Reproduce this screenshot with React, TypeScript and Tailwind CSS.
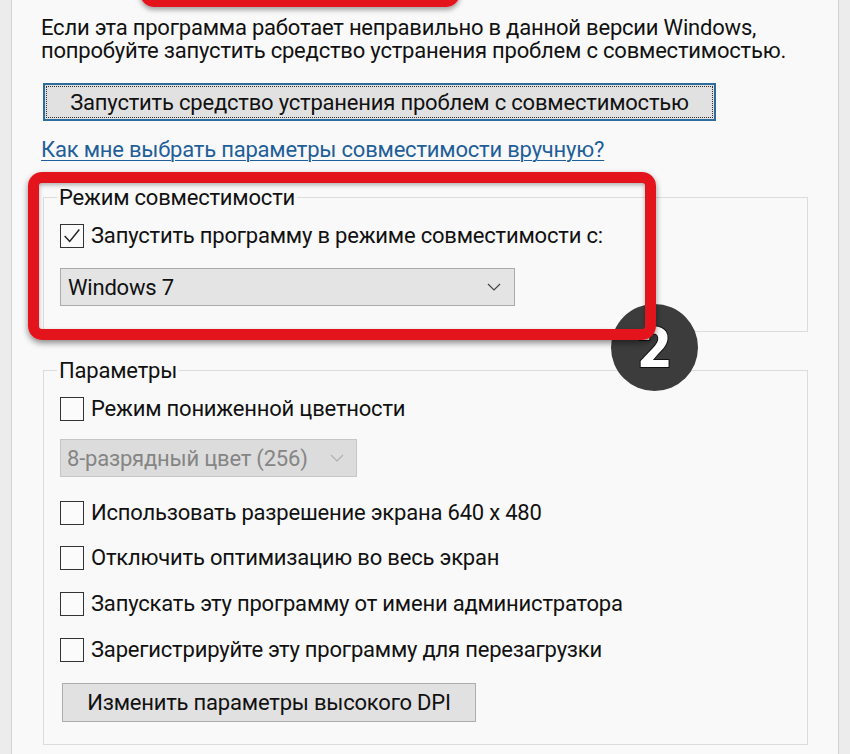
import React from 'react';

const font = { fontFamily: 'Roboto, "Open Sans", sans-serif' };

const Checkbox = ({ checked = false }: { checked?: boolean }) => (
  <span className="flex h-[24px] w-[24px] shrink-0 items-center justify-center border border-[#333] bg-[#fbfbfb]">
    {checked && (
      <svg viewBox="0 0 24 24" className="h-[22px] w-[22px]">
        <polyline points="4,12 9.5,18 20,5" fill="none" stroke="#222" strokeWidth="1.6" />
      </svg>
    )}
  </span>
);

const CheckRow = ({ label, checked = false, className = '' }: { label: string; checked?: boolean; className?: string }) => (
  <div className={'flex h-[24px] items-center gap-[7px] ' + className}>
    <Checkbox checked={checked} />
    <span className="whitespace-nowrap leading-[24px]">{label}</span>
  </div>
);

const Chevron = ({ color }: { color: string }) => (
  <svg viewBox="0 0 14 8" className="h-[8px] w-[14px]">
    <polyline points="1,1 7,7 13,1" fill="none" stroke={color} strokeWidth="1.2" />
  </svg>
);

export default function App() {
  return (
    <div className="relative flex h-[754px] w-[850px] overflow-hidden bg-[#ececec] text-[22px] tracking-[-0.2px] text-[#111]" style={font}>
      {/* left frame */}
      <div className="w-[12px] shrink-0 border-r border-[#d2d2d2]" />

      {/* dialog page */}
      <div className="flex-1 bg-[#f9f9f9] pl-[31px] pt-[16px]">
        <p className="-ml-[2px] leading-[23px]">
          Если эта программа работает неправильно в данной версии Windows,
          <br />
          попробуйте запустить средство устранения проблем с совместимостью.
        </p>

        <button className="mt-[21px] flex h-[38px] w-[673px] border-2 border-[#2f6d9c] bg-[#e1e1e1] p-[1px]">
          <span className="flex flex-1 items-center justify-center border border-dotted border-[#333]">
            Запустить средство устранения проблем с совместимостью
          </span>
        </button>

        <a className="-ml-[2px] mt-[18px] block w-fit leading-[22px] text-[#1f5f99] underline decoration-1 underline-offset-[3px]">
          Как мне выбрать параметры совместимости вручную?
        </a>

        {/* compatibility mode */}
        <fieldset className="mt-[25px] w-[765px] border border-[#dcdcdc]">
          <legend className="ml-[13px] px-[2px] leading-[23px]">Режим совместимости</legend>
          <div className="pl-[16px] pb-[25px]">
            <CheckRow className="mt-[15px]" checked label="Запустить программу в режиме совместимости с:" />
            <div className="mt-[20px] flex h-[38px] w-[455px] items-center justify-between border border-[#ababab] bg-[#e4e4e4] pl-[7px] pr-[13px]">
              <span>Windows 7</span>
              <Chevron color="#444" />
            </div>
          </div>
        </fieldset>

        {/* settings */}
        <fieldset className="mt-[27px] w-[765px] border border-[#dcdcdc]">
          <legend className="ml-[13px] px-[2px] leading-[23px]">Параметры</legend>
          <div className="pl-[16px] pb-[22px]">
            <CheckRow className="mt-[15px]" label="Режим пониженной цветности" />
            <div className="mt-[18px] flex h-[38px] w-[297px] items-center justify-between border border-[#c6c6c6] bg-[#dcdcdc] pl-[6px] pr-[12px] text-[#858585]">
              <span>8-разрядный цвет (256)</span>
              <Chevron color="#b0b0b0" />
            </div>
            <CheckRow className="mt-[24px]" label="Использовать разрешение экрана 640 x 480" />
            <CheckRow className="mt-[21px]" label="Отключить оптимизацию во весь экран" />
            <CheckRow className="mt-[22px]" label="Запускать эту программу от имени администратора" />
            <CheckRow className="mt-[22px]" label="Зарегистрируйте эту программу для перезагрузки" />
            <button className="ml-[2px] mt-[21px] flex h-[39px] w-[414px] items-center justify-center border border-[#adadad] bg-[#e1e1e1]">
              Изменить параметры высокого DPI
            </button>
          </div>
        </fieldset>
      </div>

      {/* right frame */}
      <div className="w-[12px] shrink-0 border-l border-[#d2d2d2]" />

      {/* step badge */}
      <div className="absolute left-[611px] top-[304px] flex h-[87px] w-[87px] items-center justify-center rounded-full bg-[#3c3c3c]">
        <span
          className="text-[56px] font-black leading-none text-white"
          style={{ WebkitTextStroke: '2px #111', paintOrder: 'stroke fill', fontFamily: 'Roboto, sans-serif' }}
        >
          2
        </span>
      </div>

      {/* highlight frames */}
      <div className="pointer-events-none absolute left-[140px] top-[-40px] h-[47px] w-[320px] rounded-[14px] border-[11px] border-[#e3141b] shadow-[0_3px_5px_rgba(0,0,0,0.35)]" />
      <div className="pointer-events-none absolute left-[28px] top-[172px] h-[168px] w-[628px] rounded-[14px] border-[11px] border-[#e3141b] shadow-[0_3px_6px_rgba(0,0,0,0.45),inset_0_2px_4px_rgba(0,0,0,0.3)]" />
    </div>
  );
}
